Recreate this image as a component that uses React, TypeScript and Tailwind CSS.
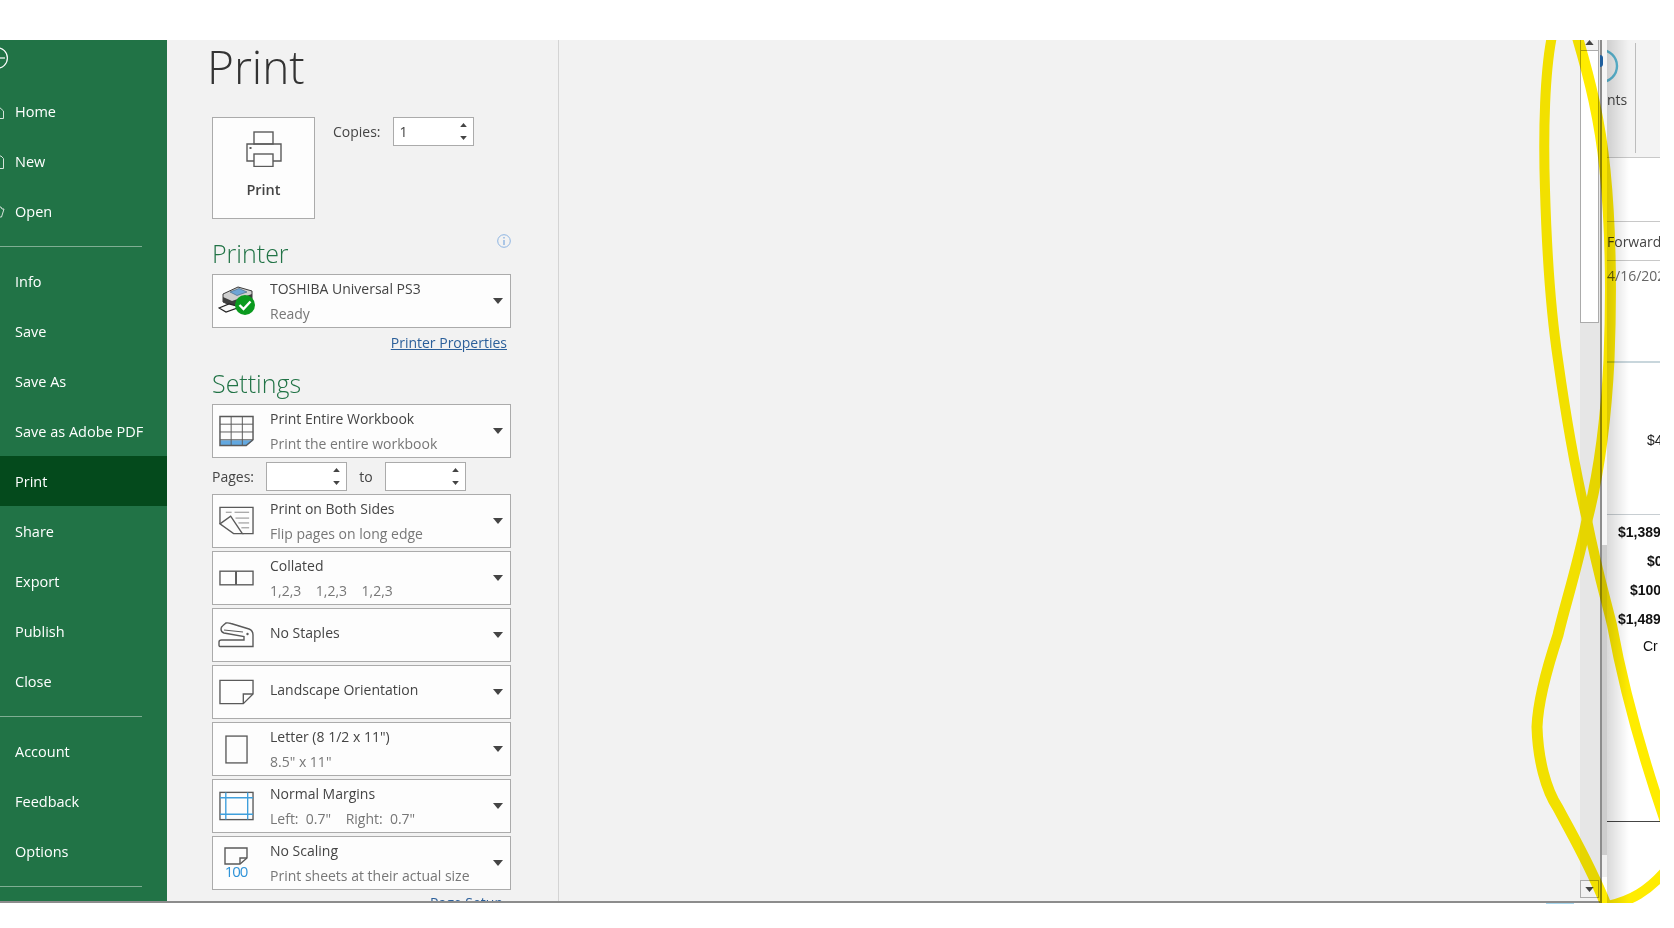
import React from 'react'

const font = "[font-family:'Open_Sans',sans-serif]"

const navTop = [
  { label: 'Home', icon: 'home' },
  { label: 'New', icon: 'new' },
  { label: 'Open', icon: 'open' },
]
const navMid = ['Info', 'Save', 'Save As', 'Save as Adobe PDF', 'Print', 'Share', 'Export', 'Publish', 'Close']
const navBottom = ['Account', 'Feedback', 'Options']

// Sidebar icons are cut off by the left edge of the window, only a sliver shows
const SliverIcon: React.FC<{ kind: string }> = ({ kind }) => (
  <svg width="15" height="18" viewBox="0 0 15 18" fill="none" stroke="#d5e3da" strokeWidth="1" className="shrink-0">
    {kind === 'home' && <path d="M-2 3 L3.5 8 V15.5 H-2" />}
    {kind === 'new' && <path d="M-2 3 H1 L3.5 5.5 V15.5 H-2" />}
    {kind === 'open' && <path d="M-2 4 H1 L2 6 H4 L1.5 14 H-2" />}
  </svg>
)

const NavItem: React.FC<{ label: string; active?: boolean; icon?: string }> = ({ label, active, icon }) => (
  <div className={`flex h-[50px] items-center text-[14.5px] text-white ${icon ? '' : 'pl-[15px]'} ${active ? '-mt-px mb-px bg-[#044a1c] pt-[2px]' : ''}`}>
    {icon && <SliverIcon kind={icon} />}
    <span className="whitespace-nowrap">{label}</span>
  </div>
)

const NavDivider = () => <div className="mt-[9px] mb-[10px] h-px w-[142px] bg-[#7fae93]" />

const Sidebar = () => (
  <div className="flex h-full w-[167px] shrink-0 flex-col overflow-hidden bg-[#217346]">
    <div className="h-[47px] pt-[7px]">
      <svg width="9" height="24" viewBox="0 0 9 24" fill="none" stroke="#ffffff" strokeWidth="1.2">
        <circle cx="-3" cy="11" r="10.4" />
        <path d="M-3 11 H5" />
      </svg>
    </div>
    {navTop.map((n) => (
      <NavItem key={n.label} label={n.label} icon={n.icon} />
    ))}
    <NavDivider />
    {navMid.map((n) => (
      <NavItem key={n} label={n} active={n === 'Print'} />
    ))}
    <NavDivider />
    {navBottom.map((n) => (
      <NavItem key={n} label={n} />
    ))}
    <NavDivider />
  </div>
)

const Tri: React.FC<{ up?: boolean; w?: number; h?: number; color?: string }> = ({ up, w = 7, h = 4, color = '#444444' }) => (
  <svg width={w} height={h} viewBox="0 0 10 6" className="block">
    <path d={up ? 'M0 6 L5 0 L10 6 Z' : 'M0 0 H10 L5 6 Z'} fill={color} />
  </svg>
)

const Spinner: React.FC<{ width: string; value?: string }> = ({ width, value }) => (
  <div className={`flex h-[29px] ${width} items-center justify-between border border-[#ababab] bg-white pr-[6px] pl-[6px] text-[14px] text-[#444]`}>
    <span>{value}</span>
    <div className="flex flex-col gap-[9px]">
      <Tri up />
      <Tri />
    </div>
  </div>
)

const stroke = '#5a5a5a'

const PrintIcon = () => (
  <svg width="36" height="36" viewBox="0 0 36 36" fill="none" stroke={stroke} strokeWidth="1.4">
    <rect x="8" y="1" width="19" height="12" fill="#fdfdfd" />
    <path d="M8 13 H1 V30 H8 M27 13 H35 V30 H27" />
    <path d="M8 13 H27" />
    <rect x="8" y="23" width="19" height="12.5" fill="#fdfdfd" />
    <rect x="3.5" y="16" width="2" height="2" fill={stroke} stroke="none" />
  </svg>
)

const PrinterStatusIcon = () => (
  <svg width="38" height="30" viewBox="0 0 38 30">
    <path d="M5 8 L20 1 L34 5 V13 L14 20 L5 16 Z" fill="#cfcfcf" stroke="#3a3a3a" strokeWidth="1" />
    <path d="M12 6 L21 2.5 L29 6 L19 9.5 Z" fill="#6fa6d6" stroke="#3f5f7a" strokeWidth="0.6" />
    <path d="M5 11 L14 15 L34 8 V13 L14 20 L5 16 Z" fill="#3d3d3d" />
    <path d="M1 22 L11 18 L22 21 L8 26 Z" fill="#f8f8f8" stroke="#222" strokeWidth="1.2" />
    <circle cx="27" cy="19" r="10" fill="#0a9a1e" />
    <path d="M21.5 19 L25.5 23 L32.5 15.5" fill="none" stroke="#ffffff" strokeWidth="2.4" />
  </svg>
)

const GridIcon = () => (
  <svg width="35" height="32" viewBox="0 0 36 32" fill="none" stroke={stroke} strokeWidth="1">
    <path d="M1 25.5 H35 V26 L28 31 H1 Z" fill="#62a8e0" stroke="none" />
    <path d="M1 31 V1 H35 V25 L28 31 H1 Z" strokeWidth="1.5" />
    <path d="M1 9 H35 M1 17 H35 M1 25 H35 M12.5 1 V31 M24 1 V31" />
  </svg>
)

const BothSidesIcon = () => (
  <svg width="35" height="30" viewBox="0 0 36 30" fill="none" stroke={stroke} strokeWidth="1.4">
    <path d="M1 18 V1 H35 V28 H24" />
    <path d="M1 18 L12 10 L24 28 L15 28 Z" fill="#fdfdfd" />
    <path d="M7 6 H13 M16 6 H31 M17 12 H31 M20 17 H31 M23 22 H31" strokeWidth="1" stroke="#888" />
  </svg>
)

const CollatedIcon = () => (
  <svg width="35" height="16" viewBox="0 0 36 16" fill="none" stroke={stroke} strokeWidth="1.4">
    <rect x="1" y="1" width="34" height="14" />
    <path d="M17.5 1 V15" strokeWidth="2" />
  </svg>
)

const StapleIcon = () => (
  <svg width="36" height="26" viewBox="0 0 36 26" fill="none" stroke={stroke} strokeWidth="1.4">
    <path d="M3 7 Q3 5 5 3.5 L8 1 Q10 0.5 13 1.5 L31 7 Q35 8.5 35 13 V24.5 H2 Q1 24.5 1 23 V20 Q1 18 3.5 18 H26 V14.5 L6 11 Q3 10 3 7 Z" />
    <path d="M6 8 L25 10" strokeWidth="1.2" />
    <circle cx="29.5" cy="12" r="1.2" fill={stroke} stroke="none" />
  </svg>
)

const LandscapeIcon = () => (
  <svg width="35" height="26" viewBox="0 0 36 26" fill="none" stroke={stroke} strokeWidth="1.4">
    <path d="M1 1 H35 V15 L25 25 H1 Z" fill="#fdfdfd" />
    <path d="M25 25 V15 H35" />
  </svg>
)

const PortraitIcon = () => (
  <svg width="23" height="29" viewBox="0 0 24 30" fill="none" stroke={stroke} strokeWidth="1.4">
    <rect x="1" y="1" width="22" height="28" />
  </svg>
)

const MarginsIcon = () => (
  <svg width="35" height="30" viewBox="0 0 36 30" fill="none">
    <rect x="1" y="1" width="34" height="28" stroke={stroke} strokeWidth="1.4" />
    <path d="M1 6.5 H35 M1 23.5 H35 M7 1 V29 M29.5 1 V29" stroke="#3f9fdc" strokeWidth="1.4" />
  </svg>
)

const ScalingIcon = () => (
  <div className="relative flex h-[32px] w-[24px] flex-col items-center">
    <svg width="24" height="18" viewBox="0 0 24 18" fill="none" stroke={stroke} strokeWidth="1.4" className="shrink-0">
      <path d="M1 1 H23 V11 L16 17 H1 Z" />
      <path d="M16 17 V11 H23" />
    </svg>
    <span className="-mt-[1px] text-[15px] leading-[14px] tracking-[-1px] text-[#2f93d8]">100</span>
  </div>
)

const rows = [
  { title: 'Print on Both Sides', sub: 'Flip pages on long edge', icon: <BothSidesIcon /> },
  { title: 'Collated', sub: '1,2,3    1,2,3    1,2,3', icon: <CollatedIcon /> },
  { title: 'No Staples', icon: <StapleIcon /> },
  { title: 'Landscape Orientation', icon: <LandscapeIcon /> },
  { title: 'Letter (8 1/2 x 11")', sub: '8.5" x 11"', icon: <PortraitIcon /> },
  { title: 'Normal Margins', sub: 'Left:  0.7"    Right:  0.7"', icon: <MarginsIcon /> },
  { title: 'No Scaling', sub: 'Print sheets at their actual size', icon: <ScalingIcon /> },
]

const Caret = () => (
  <div className="w-[25px] shrink-0 pl-[8px]">
    <Tri w={10} h={6} />
  </div>
)

const DropRow: React.FC<{ title: string; sub?: string; icon: React.ReactNode }> = ({ title, sub, icon }) => (
  <div className="flex h-[54px] items-center border border-[#ababab] bg-[#fdfdfd]">
    <div className="flex w-[46px] shrink-0 justify-center">{icon}</div>
    <div className={`flex min-w-0 flex-1 flex-col ${sub ? 'gap-[3px]' : '-mt-[4px]'} pl-[11px]`}>
      <span className="text-[14px] leading-[22px] whitespace-nowrap text-[#444]">{title}</span>
      {sub && <span className="text-[14px] leading-[22px] whitespace-pre text-[#777]">{sub}</span>}
    </div>
    <Caret />
  </div>
)

const PrintColumn = () => (
  <div className="h-full w-[392px] shrink-0 overflow-hidden border-r border-[#d4d4d4] pl-[45px]">
    <div className="h-[77px]">
      <h1 className="-ml-[5px] text-[46px] leading-[52px] font-light text-[#333]">Print</h1>
    </div>
    <div className="flex w-[299px] items-start gap-[18px]">
      <div className="flex h-[102px] w-[103px] flex-col items-center border border-[#ababab] bg-[#fdfdfd] pt-[13px]">
        <PrintIcon />
        <span className="mt-[12px] text-[14.5px] leading-[22px] font-semibold text-[#444]">Print</span>
      </div>
      <div className="flex items-center gap-[12px]">
        <span className="text-[14px] text-[#444]">Copies:</span>
        <Spinner width="w-[81px]" value="1" />
      </div>
    </div>

    <div className="mt-[15px] flex h-[40px] w-[299px] items-center justify-between">
      <h2 className="text-[25px] font-light text-[#217346]">Printer</h2>
      <svg width="14" height="14" viewBox="0 0 14 14" fill="none" stroke="#8db4e2" strokeWidth="1" className="-mt-[26px]">
        <circle cx="7" cy="7" r="6.3" />
        <path d="M7 6 V11 M7 3 V4.4" strokeWidth="1.4" />
      </svg>
    </div>
    <div className="flex h-[54px] w-[299px] items-center border border-[#ababab] bg-[#fdfdfd]">
      <div className="flex w-[46px] shrink-0 justify-center pl-[2px]">
        <PrinterStatusIcon />
      </div>
      <div className="flex flex-1 flex-col gap-[3px] pl-[11px]">
        <span className="text-[14px] leading-[22px] text-[#444]">TOSHIBA Universal PS3</span>
        <span className="text-[14px] leading-[22px] text-[#777]">Ready</span>
      </div>
      <Caret />
    </div>
    <div className="w-[295px] pt-[4px] pb-[1px] text-right text-[14px] leading-[22px] text-[#2b5f9a] underline">Printer Properties</div>

    <h2 className="mt-[9px] h-[40px] text-[25px] leading-[38px] font-light text-[#217346]">Settings</h2>
    <div className="flex w-[299px] flex-col">
      <DropRow title="Print Entire Workbook" sub="Print the entire workbook" icon={<GridIcon />} />
      <div className="flex h-[36px] items-center">
        <span className="w-[54px] text-[14px] text-[#444]">Pages:</span>
        <Spinner width="w-[81px]" />
        <span className="w-[38px] text-center text-[14px] text-[#444]">to</span>
        <Spinner width="w-[81px]" />
      </div>
      <div className="flex flex-col gap-[3px]">
        {rows.map((r) => (
          <DropRow key={r.title} {...r} />
        ))}
      </div>
      <div className="mt-[2px] pr-[8px] text-right text-[14px] leading-[22px] text-[#2b5f9a]">Page Setup</div>
    </div>
  </div>
)

const PanelScrollbar = () => (
  <div className="flex h-full w-[20px] shrink-0 flex-col bg-[#e6e6e6]">
    <div className="flex h-[11px] w-[19px] shrink-0 items-start justify-center overflow-hidden border-x border-b border-[#ababab] bg-[#f2f2f2]">
      <Tri up w={9} h={5} />
    </div>
    <div className="h-[272px] w-[19px] shrink-0 border-x border-b border-[#ababab] bg-white" />
    <div className="flex-1" />
    <div className="flex h-[18px] w-[19px] shrink-0 items-center justify-center border border-[#ababab] bg-[#f2f2f2]">
      <Tri w={9} h={5} />
    </div>
    <div className="h-[3px] shrink-0 bg-[#f2f2f2]" />
  </div>
)

// What shows of the workbook window behind the backstage view
const BehindWindow = () => (
  <div className={`relative h-[863px] flex-1 overflow-hidden bg-white font-['Liberation_Sans',sans-serif]`}>
    <div className="relative h-[118px] border-b border-[#c8c8c8] bg-[#f3f3f3]">
      <svg width="20" height="50" viewBox="0 0 20 50" fill="none" className="absolute top-[8px] left-0">
        <circle cx="-6" cy="18" r="16" stroke="#5bb8d4" strokeWidth="2.4" />
      </svg>
      <span className={`absolute top-[49px] left-0 text-[14px] text-[#444] ${font}`}>nts</span>
      <div className="absolute top-[3px] left-[28px] h-[110px] w-px bg-[#bdbdbd]" />
    </div>
    <div className="h-[64px] border-b border-[#c8c8c8]" />
    <div className={`flex h-[39px] items-center border-b border-[#c8c8c8] text-[14px] whitespace-nowrap text-[#444] ${font}`}>Forward</div>
    <div className={`h-[102px] border-b-2 border-[#c8d6dc] pt-[4px] pl-0 text-[14px] whitespace-nowrap text-[#666] ${font}`}>4/16/2021</div>
    <div className="flex h-[152px] items-center border-b border-[#c8ced2] pt-[3px] pl-[40px] text-[14px] font-medium whitespace-nowrap text-[#222]">
      $425.00
    </div>
    <div className="flex h-[147px] flex-col pt-[3px] text-[14px] leading-[29px] font-bold whitespace-nowrap text-[#111]">
      <span className="pl-[11px]">$1,389.00</span>
      <span className="pl-[40px]">$0.00</span>
      <span className="pl-[23px]">$100.00</span>
      <span className="pl-[11px]">$1,489.00</span>
      <span className="-mt-[2px] pl-[36px] font-normal">Cr</span>
    </div>
    <div className="mt-[159px] h-px bg-[#444]" />
    <div className="absolute inset-y-0 left-0 w-[22px] bg-linear-to-r from-black/15 to-transparent" />
  </div>
)

const Scribble = () => (
  <svg width="160" height="863" viewBox="1500 40 160 863" fill="none" className="pointer-events-none absolute top-[40px] left-[1500px] mix-blend-multiply">
    <path
      d="M1552 36 C1545 70 1543 130 1545 190 C1547 260 1552 320 1558 360 C1565 410 1575 470 1587 520 C1597 570 1606 600 1612 625 C1622 680 1640 750 1668 830"
      stroke="#ffec00"
      strokeWidth="10"
    />
    <path
      d="M1577 36 C1590 80 1600 120 1605 170 C1612 240 1611 310 1609 360 C1606 420 1600 470 1587 520 C1578 565 1565 605 1558 635 C1548 665 1538 700 1537 727 C1538 760 1546 790 1558 808 C1575 840 1590 865 1606 905"
      stroke="#ffec00"
      strokeWidth="11"
    />
    <path d="M1608 906 C1630 901 1648 892 1668 868" stroke="#ffec00" strokeWidth="10" />
  </svg>
)

const App: React.FC = () => {
  return (
    <div className={`relative h-[928px] w-[1674px] overflow-hidden bg-white pt-[40px] ${font}`}>
      <div className="flex w-[1660px] items-start">
        <div className="w-[1602px] shrink-0">
          <div className="flex h-[861px] border-r-2 border-[#8c8c8c] bg-[#f2f2f2]">
            <Sidebar />
            <PrintColumn />
            <div className="flex-1" />
            <PanelScrollbar />
          </div>
          <div className="h-[2px] bg-[#8c8c8c]" />
          <div className="ml-[1546px] h-[1px] w-[28px] bg-[#a8d8f0]" />
        </div>
        <div className="flex h-[863px] w-[5px] shrink-0 flex-col">
          <div className="h-[505px] bg-[#f6f6f6]" />
          <div className="h-[310px] bg-[#cdcdcd]" />
          <div className="h-[22px] bg-[#f0f0f0]" />
        </div>
        <BehindWindow />
      </div>
      {/* dark blue bit of the ribbon icon showing through the gap */}
      <div className="absolute top-[55px] left-[1600px] h-[12px] w-[3px] rounded-r-full bg-[#1f5f9e]" />
      <Scribble />
    </div>
  )
}

export default App
